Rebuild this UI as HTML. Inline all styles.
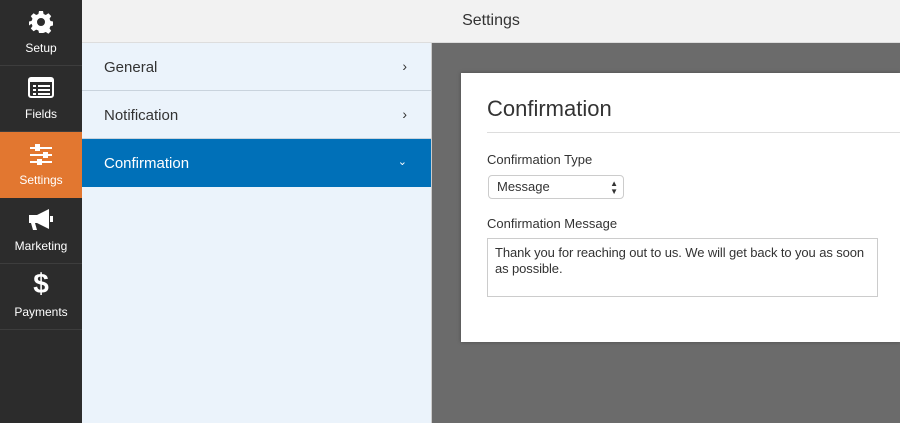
<!DOCTYPE html><html><head><style>
body{margin:0;width:900px;height:423px;overflow:hidden;font-family:"Liberation Sans",sans-serif;position:relative;background:#6b6b6b}
.sb{position:absolute;left:0;top:0;width:82px;height:423px;background:#2c2c2c}
.it{position:absolute;left:0;width:82px;height:65px;border-bottom:1px solid #3d3d3d;color:#fff;font-size:12px;text-align:center}
.it svg{position:absolute;left:29px;top:10px}
.it span{position:absolute;left:0;right:0;top:41px}
.hd{position:absolute;left:82px;top:0;width:818px;height:42px;background:#f2f2f2;border-bottom:1px solid #ddd;text-align:center;line-height:42px;font-size:16px;color:#333}
.lp{position:absolute;left:82px;top:43px;width:349px;height:380px;background:#ebf3fb;border-right:1px solid #ccc}
.li{height:47px;border-bottom:1px solid #c9d3dd;line-height:50px;padding-left:22px;font-size:15px;color:#333;position:relative}
.li i{position:absolute;right:24px;top:-2px;font-style:normal;font-size:14px}
.card{position:absolute;left:461px;top:73px;width:439px;height:269px;background:#fff;box-shadow:0 0 4px rgba(0,0,0,.3)}
</style></head><body>
<div class="sb">
<div class="it" style="top:0"><svg width="24" height="24" viewBox="0 0 24 24"><path fill="#fff" d="M10 1h4l.6 3 2.2 1 2.6-1.7 2.8 2.8L20.5 8.7l1 2.3 2.5.5v4l-2.5.6-1 2.3 1.7 2.5-2.8 2.8-2.6-1.7-2.2.9L14 23h-4l-.6-2.5-2.2-.9-2.6 1.7-2.8-2.8 1.7-2.5-1-2.3L0 15.5v-4l2.5-.5 1-2.3L1.8 6.1l2.8-2.8L7.2 5l2.2-1zM12 8a4 4 0 100 8 4 4 0 000-8z"/></svg><span>Setup</span></div>
<div class="it" style="top:66px"><svg width="26" height="22" viewBox="0 0 26 22" style="left:28px;top:11px"><rect x="1" y="1" width="24" height="19" rx="2" fill="none" stroke="#fff" stroke-width="2"/><rect x="1" y="1" width="24" height="4" fill="#fff"/><rect x="5" y="8" width="3" height="2" fill="#fff"/><rect x="10" y="8" width="12" height="2" fill="#fff"/><rect x="5" y="12" width="3" height="2" fill="#fff"/><rect x="10" y="12" width="12" height="2" fill="#fff"/><rect x="5" y="16" width="3" height="2" fill="#fff"/><rect x="10" y="16" width="12" height="2" fill="#fff"/></svg><span>Fields</span></div>
<div class="it" style="top:132px;background:#e27730;border-color:#e27730"><svg width="24" height="22" viewBox="0 0 24 22" style="left:30px;top:12px"><rect x="0" y="3" width="22" height="2" fill="#fff"/><rect x="0" y="10" width="22" height="2" fill="#fff"/><rect x="0" y="17" width="22" height="2" fill="#fff"/><rect x="5" y="0" width="5" height="7" fill="#fff"/><rect x="13" y="8" width="5" height="6" fill="#fff"/><rect x="7" y="15" width="5" height="6" fill="#fff"/></svg><span>Settings</span></div>
<div class="it" style="top:198px"><svg width="26" height="24" viewBox="0 0 26 24" style="left:28px"><path fill="#fff" d="M1 7h8l12-6v20L9 15H7l2 7H5l-2-7H1z"/><rect x="22" y="8" width="3" height="6" fill="#fff"/></svg><span>Marketing</span></div>
<div class="it" style="top:264px"><span style="top:4px;font-size:28px;font-weight:bold">$</span><span>Payments</span></div>
</div>
<div class="hd">Settings</div>
<div class="lp">
<div class="li">General<i>›</i></div>
<div class="li">Notification<i>›</i></div>
<div class="li" style="background:#0070b8;color:#fff;border-color:#0070b8">Confirmation<i style="font-size:11px">⌄</i></div>
</div>
<div class="card">
<div style="position:absolute;left:26px;top:23px;font-size:22px;color:#333">Confirmation</div>
<div style="position:absolute;left:26px;top:59px;right:0;border-top:1px solid #ddd"></div>
<div style="position:absolute;left:26px;top:79px;font-size:13px;color:#333">Confirmation Type</div>
<div style="position:absolute;left:27px;top:102px;width:136px;border:1px solid #ccc;border-radius:4px;font-size:13px;line-height:22px;color:#333;box-sizing:border-box;padding-left:8px;height:24px;background:#fff">Message<span style="position:absolute;right:5px;font-size:8px;line-height:8px;top:4px">▲<br>▼</span></div>
<div style="position:absolute;left:26px;top:143px;font-size:13px;color:#333">Confirmation Message</div>
<div style="position:absolute;left:26px;top:165px;width:391px;height:59px;border:1px solid #ccc;box-sizing:border-box;padding:6px 7px;font-size:13px;letter-spacing:-0.1px;line-height:16px;color:#333">Thank you for reaching out to us. We will get back to you as soon<br>as possible.</div>
</div>
</body></html>
